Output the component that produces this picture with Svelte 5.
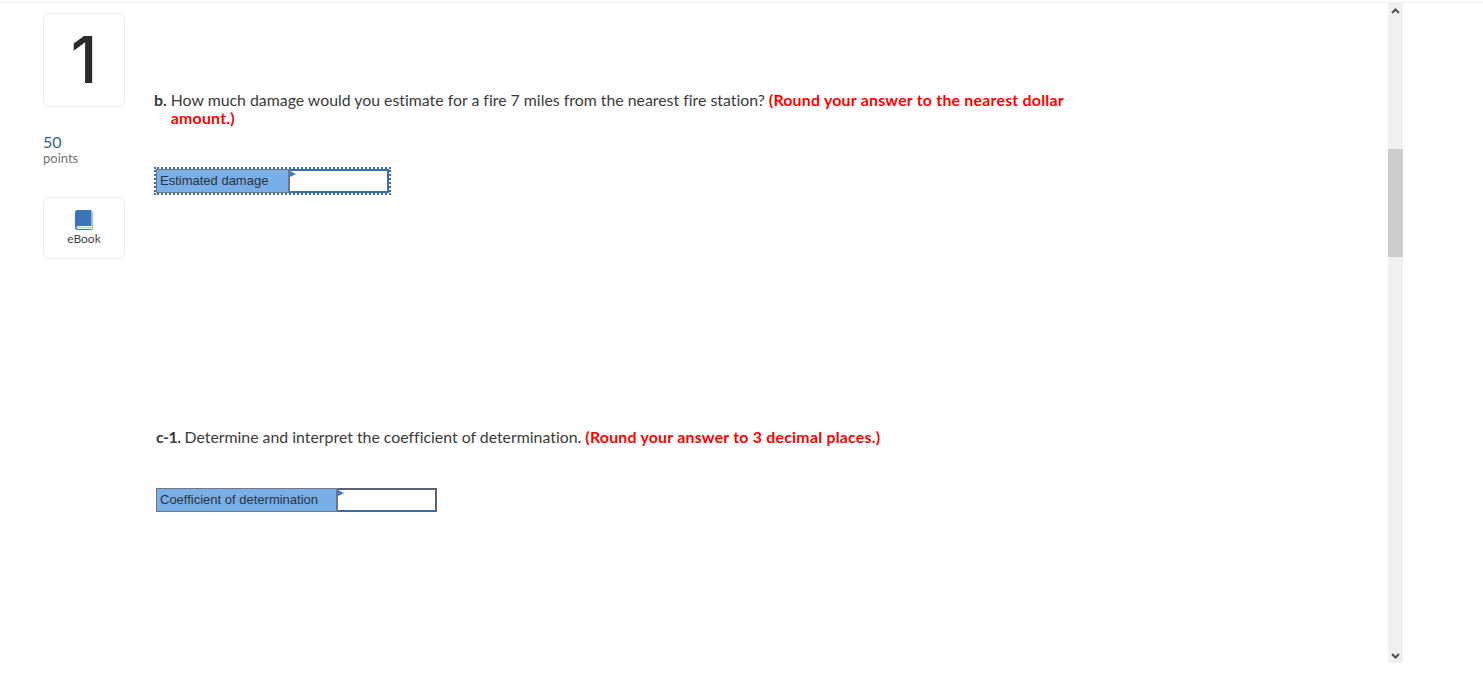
<script>
	let damage = $state('');
	let coefficient = $state('');
</script>

<div class="page">
	<div class="frame">
		<aside class="side">
			<div class="number">1</div>
			<div class="points">
				<div class="value">50</div>
				<div class="label">points</div>
			</div>
			<button class="ebook" type="button">
				<svg width="18" height="20" viewBox="0 0 18 20" aria-hidden="true">
					<path d="M2.500 0H15.500a1 1 0 0 1 1 1v15H3a1.500 1.500 0 0 0 0 3h13.500v1H2.500A2.500 2.500 0 0 1 0 17.500v-15A2.500 2.500 0 0 1 2.500 0z" fill="#3b74b8" />
					<path d="M16.800 2H18v18h-1.200z" fill="#9db9db" />
					<path d="M2 17.200h14.800v.9H2z" fill="#9db9db" />
				</svg>
				<span>eBook</span>
			</button>
		</aside>

		<main class="content">
			<section class="part-b">
				<div class="question hanging">
					<b>b.</b>
					<p>How much damage would you estimate for a fire 7 miles from the nearest fire station? <strong>(Round your answer to the nearest dollar amount.)</strong></p>
				</div>
				<div class="focus-ring">
					<div class="answer-table">
						<div class="cell-label short">Estimated damage</div>
						<div class="cell-input">
							<i class="flag"></i>
							<input bind:value={damage} aria-label="Estimated damage" />
						</div>
					</div>
				</div>
			</section>

			<section class="part-c">
				<p class="question">
					<b>c-1.</b> Determine and interpret the coefficient of determination. <strong>(Round your answer to 3 decimal places.)</strong>
				</p>
				<div class="answer-table">
					<div class="cell-label long">Coefficient of determination</div>
					<div class="cell-input long-input">
						<i class="flag"></i>
						<input bind:value={coefficient} aria-label="Coefficient of determination" />
					</div>
				</div>
			</section>
		</main>

		<div class="scrollbar">
			<div class="arrow">
				<svg width="9" height="6" viewBox="0 0 9 6" aria-hidden="true"><path d="M1 5l3.500-3.500L8 5" fill="none" stroke="#505050" stroke-width="2" /></svg>
			</div>
			<div class="track"><div class="thumb"></div></div>
			<div class="arrow">
				<svg width="9" height="6" viewBox="0 0 9 6" aria-hidden="true"><path d="M1 1l3.500 3.500L8 1" fill="none" stroke="#505050" stroke-width="2" /></svg>
			</div>
		</div>
	</div>
</div>

<style>
	:global(body) {
		margin: 0;
		background: #fff;
	}

	.page {
		height: 683px;
		padding: 2px 0 20px;
		box-sizing: border-box;
		overflow: hidden;
		font-family: Lato, "Liberation Sans", sans-serif;
		font-variant-ligatures: none;
		color: #333;
	}

	.frame {
		display: flex;
		height: 661px;
		border-top: 1px solid #eeeeee;
		box-sizing: border-box;
		padding-right: 80px;
	}

	.side {
		width: 82px;
		margin: 10px 0 0 43px;
		flex: none;
	}

	.number {
		height: 94px;
		box-sizing: border-box;
		border: 1px solid #ececec;
		border-radius: 5px;
		display: flex;
		align-items: center;
		justify-content: center;
		font-family: Inter, sans-serif;
		font-size: 64px;
		font-weight: 500;
		line-height: 1;
		color: #2b2b2b;
	}

	.points {
		margin-top: 26px;
	}

	.value {
		font-size: 16px;
		line-height: 18px;
		color: #2f5f96;
	}

	.label {
		font-size: 13px;
		line-height: 14px;
		color: #757575;
	}

	.ebook {
		display: flex;
		flex-direction: column;
		align-items: center;
		width: 82px;
		height: 62px;
		margin-top: 32px;
		padding: 12px 0 0;
		background: #fff;
		border: 1px solid #ececec;
		border-radius: 5px;
		font-family: inherit;
		font-size: 12px;
		color: #444;
	}

	.ebook span {
		margin-top: 1px;
	}

	.content {
		flex: 1;
		min-width: 0;
		padding: 0 0 0 29px;
	}

	.question {
		margin: 0;
		font-size: 15.850px;
		line-height: 18px;
		color: #3a3a3a;
	}

	.question b {
		font-weight: 700;
	}

	.question strong {
		color: #f00;
		font-weight: 700;
		letter-spacing: 0.240px;
	}

	.hanging {
		display: flex;
		gap: 4px;
		width: 930px;
	}

	.hanging p {
		margin: 0;
	}

	.part-b {
		padding-top: 88px;
	}

	.focus-ring {
		width: fit-content;
		margin-top: 40px;
		border: 2px dotted #3a6ea8;
	}

	.answer-table {
		display: flex;
		width: fit-content;
		height: 24px;
		font-family: "Liberation Sans", Arial, sans-serif;
		font-size: 13px;
		color: #2a3340;
	}

	.cell-label {
		display: flex;
		align-items: center;
		padding: 0 0 1px 3px;
		box-sizing: border-box;
		background: #7aaee6;
		border: 1px solid #6e7782;
		border-right-width: 2px;
	}

	.short {
		width: 134px;
	}

	.long {
		width: 182px;
	}

	.cell-input {
		position: relative;
		width: 99px;
		box-sizing: border-box;
		border: 2px solid #3a6ea8;
		border-left: 0;
		background: #fff;
	}

	.long-input {
		border-top-color: #5a6470;
		border-right-color: #5a6470;
	}

	.cell-input input {
		display: block;
		width: 100%;
		height: 100%;
		border: 0;
		padding: 0;
		outline: none;
		background: transparent;
	}

	.flag {
		position: absolute;
		left: 0;
		top: 0;
		border-left: 6px solid #3a7bc8;
		border-top: 3px solid transparent;
		border-bottom: 3px solid transparent;
	}

	.part-c {
		padding: 233px 0 0 2px;
	}

	.part-c b {
		letter-spacing: -0.500px;
	}

	.part-c .answer-table {
		margin-top: 42px;
	}

	.scrollbar {
		flex: none;
		width: 15px;
		margin-left: auto;
		display: flex;
		flex-direction: column;
		background: #f0f0f0;
	}

	.arrow {
		height: 15px;
		flex: none;
		display: flex;
		align-items: center;
		justify-content: center;
	}

	.track {
		flex: 1;
		padding-top: 131px;
	}

	.thumb {
		height: 108px;
		background: #cdcdcd;
	}
</style>
